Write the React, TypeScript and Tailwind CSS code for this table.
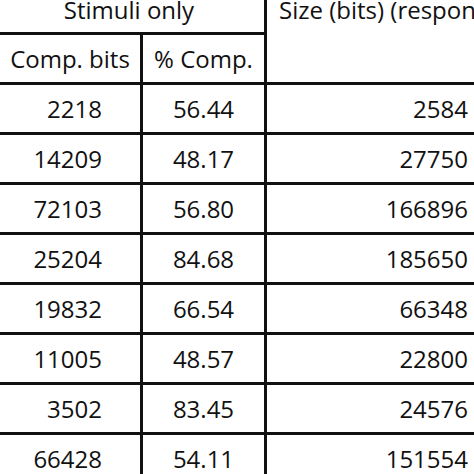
import React from 'react';

const rows: [string, string, string][] = [
  ['2218', '56.44', '2584'],
  ['14209', '48.17', '27750'],
  ['72103', '56.80', '166896'],
  ['25204', '84.68', '185650'],
  ['19832', '66.54', '66348'],
  ['11005', '48.57', '22800'],
  ['3502', '83.45', '24576'],
  ['66428', '54.11', '151554'],
];

const App: React.FC = () => {
  return (
    <div
      className="w-[474px] h-[474px] overflow-hidden bg-white text-[#111] text-[24px] leading-[20px]"
      style={{ fontFamily: '"Open Sans", "Liberation Sans", sans-serif' }}
    >
      <div className="grid grid-cols-[140px_121px_207px] grid-rows-[32px_47px] auto-rows-[47px] gap-[3px] bg-[#111]">
        {/* header */}
        <div className="col-span-2 bg-white flex justify-center items-start pt-0 pr-[6px]">
          Stimuli only
        </div>
        <div className="row-span-2 bg-white pl-[12px] whitespace-nowrap overflow-hidden">
          Size (bits) (responses)
        </div>
        <div className="bg-white flex items-center justify-center">Comp. bits</div>
        <div className="bg-white flex items-center justify-center">% Comp.</div>

        {/* body */}
        {rows.map(([bits, pct, size]) => (
          <React.Fragment key={bits}>
            <div className="bg-white flex items-center justify-end pr-[38px]">{bits}</div>
            <div className="bg-white flex items-center justify-center">{pct}</div>
            <div className="bg-white flex items-center justify-end pr-[6px]">{size}</div>
          </React.Fragment>
        ))}
      </div>
    </div>
  );
};

export default App;
